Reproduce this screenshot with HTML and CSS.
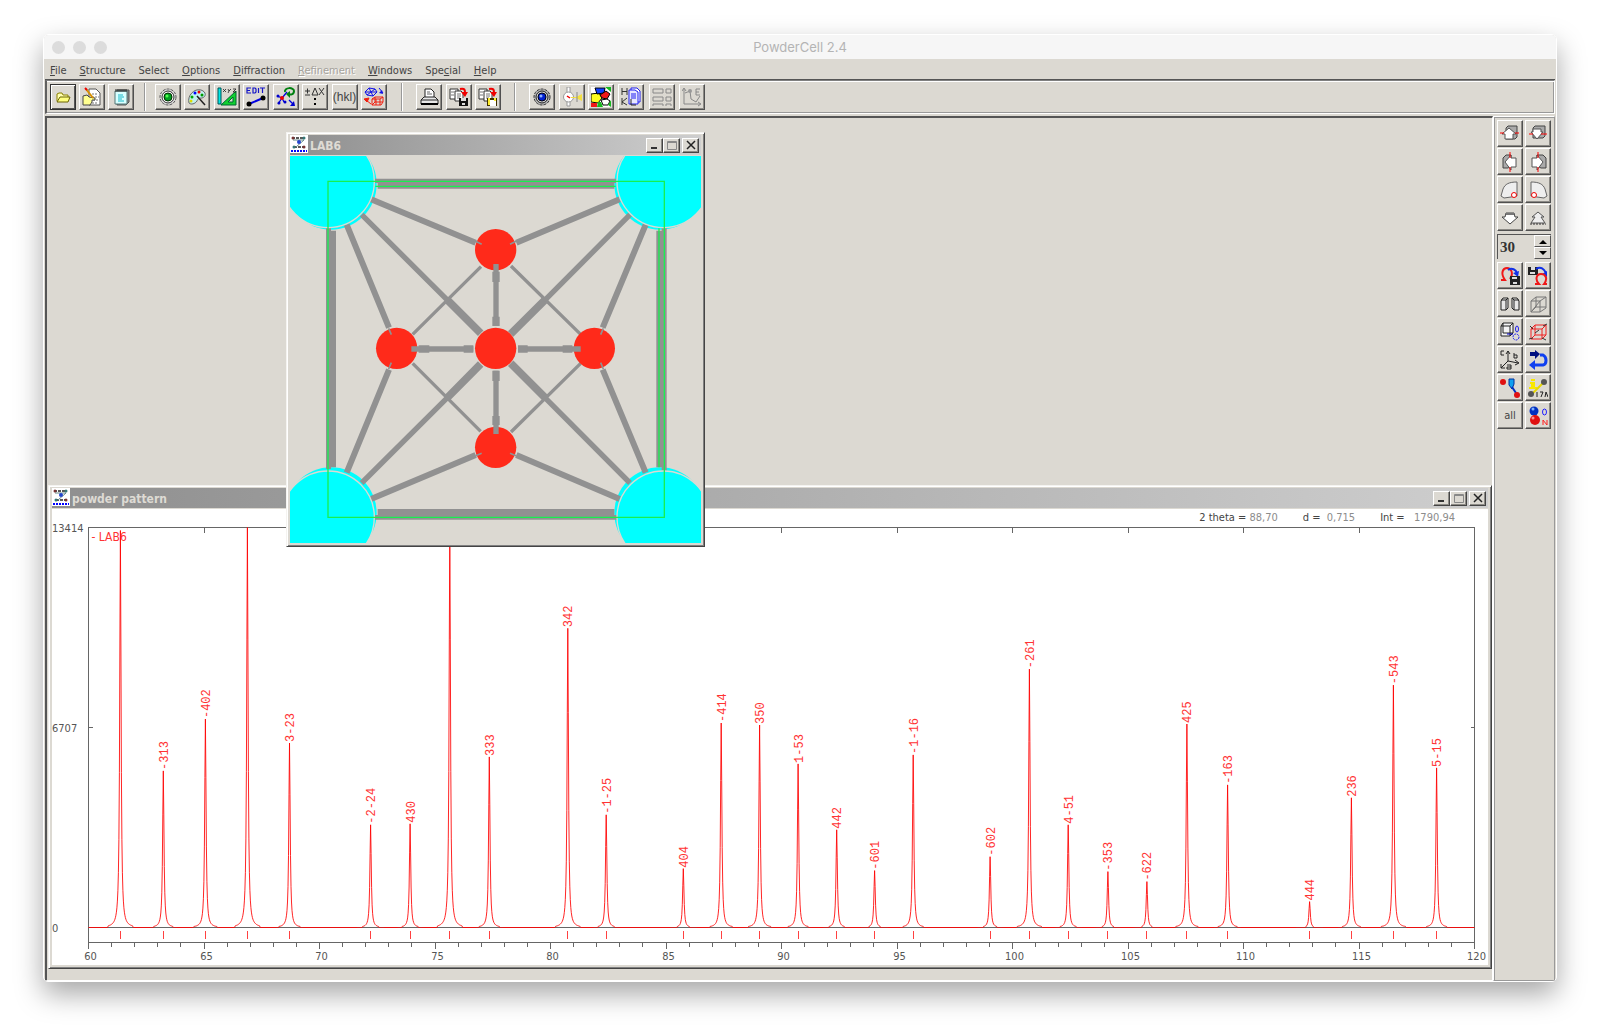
FILE: index.html
```html
<!DOCTYPE html>
<html lang="en">

<head>
    <meta charset="UTF-8">
    <meta name="viewport" content="width=device-width, initial-scale=1.0">
    <title>PowderCell 2.4</title>
    <link rel="stylesheet" href="styles.css">
</head>

<body>
    <div class="app">
        <header class="mac-title">
            <span class="dots"><i></i><i></i><i></i></span>
            <span>PowderCell 2.4</span>
        </header>

        <nav class="menu">
            <button><u>F</u>ile</button>
            <button><u>S</u>tructure</button>
            <button>Select</button>
            <button><u>O</u>ptions</button>
            <button><u>D</u>iffraction</button>
            <button disabled><u>R</u>efinement</button>
            <button><u>W</u>indows</button>
            <button>Spe<u>c</u>ial</button>
            <button><u>H</u>elp</button>
        </nav>

        <!-- toolbar -->
        <div class="toolbar">
            <div class="group files">
                <button class="tool active" aria-label="Open">
                    <svg viewBox="0 0 20 20"><path d="M4 14V7l2-1h3l1 2h5v2" fill="#ffffb0" stroke="#8a8000"/><path d="M4 15l3-5h10l-2 5z" fill="#ffff80" stroke="#6b6400"/></svg>
                </button>
                <button class="tool" aria-label="Edit structure">
                    <svg viewBox="0 0 20 20"><path d="M7 2h7l4 4v12H7z" fill="#fff" stroke="#555"/><path d="M10 7h6M10 10h7M11 13h6M10 16h6" stroke="#777" stroke-dasharray="2 1"/><path d="M1 9l4-1 2 2 6 1v2h-3v2l-2 3H1z" fill="#ffff90" stroke="#444"/><path d="M4 2l7 9" stroke="#d89000" stroke-width="2"/><path d="M3 1l2 2" stroke="#e00" stroke-width="2"/></svg>
                </button>
                <button class="tool" aria-label="Notes">
                    <svg viewBox="0 0 20 20"><path d="M6 3h12v12l-3 3H6z" fill="#888" stroke="#555"/><path d="M4 4h12v13H4z" fill="#d8ffff" stroke="#577"/><path d="M5 2v3M7 2v3M9 2v3M11 2v3M13 2v3M15 2v3" stroke="#222"/><path d="M7 8h5M7 10h6M7 12h4M7 14h6" stroke="#18b8c8"/></svg>
                </button>
            </div>
            <div class="group main">
                <button class="tool" aria-label="Atoms">
                    <svg viewBox="0 0 20 20"><circle cx="10" cy="10" r="8" fill="#ddd" stroke="#555" stroke-dasharray="3 1"/><circle cx="10" cy="10" r="6" fill="#eee" stroke="#333"/><circle cx="10" cy="10" r="4" fill="#00a020" stroke="#003000"/><circle cx="9" cy="9" r="1.5" fill="#50ff50"/></svg>
                </button>
                <button class="tool" aria-label="Colours">
                    <svg viewBox="0 0 20 20"><path d="M2 16C0 9 7 1 14 3c6 2 5 7 1 8-4 0-4 1-5 3-2 3-6 4-8 2z" fill="#c0f0f0" stroke="#666"/><circle cx="8" cy="6" r="1.500" fill="#00f"/><circle cx="12" cy="5" r="1.500" fill="#e00"/><circle cx="15" cy="8" r="1.500" fill="#090"/><circle cx="5" cy="10" r="1.500" fill="#0a0"/><circle cx="4" cy="14" r="1.500" fill="#dd0"/><path d="M10 9l8 9" stroke="#222" stroke-width="1.500"/></svg>
                </button>
                <button class="tool" aria-label="Measure">
                    <svg viewBox="0 0 20 20"><path d="M1 1h3v16H1z" fill="#00e8e8" stroke="#055"/><path d="M4 18L19 4v14z" fill="#10d030" stroke="#063"/><path d="M11 15l5-5v5z" fill="#dcd9d2" stroke="#063"/><path d="M6 2l3 3M9 2L6 5M11 2l1 2 2-2M12 4l-1 2M16 2h3l-3 3h3" stroke="#222" stroke-width=".8" fill="none"/></svg>
                </button>
                <button class="tool" aria-label="Edit bonds">
                    <svg viewBox="0 0 20 20"><path d="M5 1H1v5h4M1 3.500h3M7 1v5h2l1-1V2L9 1zM12.500 1v5M14 1h5M16.500 1v5" stroke="#1414c8" stroke-width="1.200" fill="none"/><path d="M3 17l14-6" stroke="#0000e0" stroke-width="2"/><circle cx="3" cy="17" r="2.500"/><circle cx="17" cy="11" r="2.500"/></svg>
                </button>
                <button class="tool" aria-label="Rotate bonds">
                    <svg viewBox="0 0 20 20"><path d="M1 9l5 2 2 4M6 11l5-6M2 17l4-6M13 13l4 4" stroke="#0000e0" stroke-width="1.300" fill="none"/><circle cx="6" cy="11" r="2" fill="#e00"/><circle cx="3" cy="16" r="1.500" fill="#00c"/><circle cx="2" cy="9" r="1.500" fill="#00c"/><circle cx="9" cy="15" r="1.500" fill="#00c"/><path d="M19 19h-5l4-5z" fill="#00c"/><path d="M9 5c-1-5 9-5 9-1s-4 4-6 3" stroke="#008010" stroke-width="2" fill="none"/><path d="M14 4v7l-4-4z" fill="#008010"/></svg>
                </button>
                <button class="tool" aria-label="Shift origin">
                    <svg viewBox="0 0 20 20"><path d="M0 4h5M2.500 1.500v5M0 8h5M7 8l3-7 3 7zM14 1l5 7M19 1l-5 7" stroke="#333" fill="none"/><path d="M9 11h2v2H9zM9 16h2v2H9z"/></svg>
                </button>
                <button class="tool hkl" aria-label="Miller indices">(hkl)</button>
                <button class="tool" aria-label="Transform">
                    <svg viewBox="0 0 20 20"><path d="M1 5l4-4 6 1 2 3-4 4-6-1zM1 5l6 0 4-3M5 1l2 4 2 4M3 8l4-3 6 0" stroke="#1010e8" fill="none"/><path d="M15 1l4 5" stroke="#1010e8"/><path d="M19 7l-4-1 3-3z" fill="#1010e8"/><path d="M8 12l3-2h8v5l-2 3H8zM8 12h8v6M16 12l3-2M11 10v5l-3 3M11 15h8M12 12v6" stroke="#f02010" fill="none"/><path d="M0 12l5-1-2 4zM2 13l5 4" fill="#f02010" stroke="#f02010"/></svg>
                </button>
            </div>
            <div class="group output">
                <button class="tool" aria-label="Print">
                    <svg viewBox="0 0 20 20"><path d="M6 10V2h6l3 3v5" fill="#fff" stroke="#222"/><path d="M8 5h3M8 7h5" stroke="#666"/><path d="M2 13l3-3h11l3 3v4H2zM2 13h17" fill="#e8e8e8" stroke="#222"/><path d="M2 17h17" stroke="#000" stroke-width="2"/></svg>
                </button>
                <button class="tool" aria-label="Save data">
                    <svg viewBox="0 0 20 20"><path d="M1 2h8v10H1z" fill="#fff" stroke="#333"/><path d="M6 4h6l2 2v8H6z" fill="#fff" stroke="#333"/><path d="M2 5h3M2 8h3M8 7h4M8 9h4M8 11h3" stroke="#777"/><path d="M11 2c5-1 5 1 5 4" stroke="#f00000" stroke-width="2" fill="none"/><path d="M12 5h7l-3 5z" fill="#f00000"/><path d="M10 11h9v8h-9z" fill="#111"/><path d="M12 11h5v3h-5zM13 16h3v2h-3z" fill="#ddd"/></svg>
                </button>
                <button class="tool" aria-label="Copy data">
                    <svg viewBox="0 0 20 20"><path d="M1 2h8v10H1z" fill="#fff" stroke="#333"/><path d="M6 4h6l2 2v8H6z" fill="#fff" stroke="#333"/><path d="M2 5h3M2 8h3M8 7h4M8 9h4M8 11h3" stroke="#777"/><path d="M11 2c5-1 5 1 5 4" stroke="#f00000" stroke-width="2" fill="none"/><path d="M12 5h7l-3 5z" fill="#f00000"/><path d="M9 11h10v8H9z" fill="#403000"/><path d="M12 13h6v6h-6z" fill="#fff"/><path d="M10 11h2v7h-2zM16 11h2v3h-2z" fill="#ffee30"/></svg>
                </button>
            </div>
            <div class="group view">
                <button class="tool" aria-label="Diffraction on">
                    <svg viewBox="0 0 20 20"><circle cx="10" cy="10" r="8" fill="#b8b8b8" stroke="#333" stroke-dasharray="3 1"/><circle cx="10" cy="10" r="6" fill="#ccc" stroke="#222"/><circle cx="10" cy="10" r="4" fill="#0020d0" stroke="#001"/><circle cx="9" cy="9" r="1.500" fill="#90b0ff"/></svg>
                </button>
                <button class="tool" aria-label="Experiment">
                    <svg viewBox="0 0 20 20"><path d="M5 0h3v6H5zM5 14h3v5H5z" fill="#fff" stroke="#999"/><circle cx="6.500" cy="10" r="5" fill="#fff" stroke="#999"/><path d="M9 10h5l6-3v7l-6-3H9z" fill="#f4e040"/><path d="M5 9l3 2" stroke="#e00" stroke-width="1.500"/><path d="M15 5v10" stroke="#888"/></svg>
                </button>
                <button class="tool" aria-label="Phases">
                    <svg viewBox="0 0 20 20"><path d="M0 0h20v20H0z" fill="#fff"/><path d="M0 7l8-1 3 5-4 5-7-1z" fill="#ffff20" stroke="#000"/><path d="M4 1h10l-1 5-7 1z" fill="#1040ff" stroke="#000"/><path d="M9 8l6-4 4 3-3 5-5-1z" fill="#f01818" stroke="#000"/><path d="M10 13l6-1 3 2-2 4h-5z" fill="#fff" stroke="#000"/><path d="M14 0h6v5zM7 15h3l2 5H6zM17 18l3-5v7z" fill="#18b820"/><path d="M0 16h6v4H0z" fill="#f01818"/></svg>
                </button>
                <button class="tool" aria-label="HKL list">
                    <svg viewBox="0 0 20 20"><path d="M1 1v7M6 1v7M1 4.500h5M1 11v7M6 11l-5 4 5 3" stroke="#333" fill="none"/><path d="M10 3V1h6l3 3v11h-3" fill="#fff" stroke="#2020f0"/><path d="M8 3h6l3 2v12H8z" fill="#e8e8ff" stroke="#2020f0"/><path d="M10 7h5M10 9h5M10 11h5" stroke="#2020f0"/><path d="M10 12v6h5" stroke="#222" fill="none"/></svg>
                </button>
            </div>
            <div class="group last">
                <button class="tool" aria-label="Tile" disabled>
                    <svg viewBox="0 0 20 20"><path d="M1 2h10v4H1zM14 2h5v4h-5zM1 10h10v4H1zM14 10h5v4h-5zM1 19v-2h10v2M14 19v-2h5v2" fill="none" stroke="#888"/></svg>
                </button>
                <button class="tool" aria-label="Energy" disabled>
                    <svg viewBox="0 0 20 20"><path d="M2 2v15h16M0 4l2-3 2 3M16 15l3 2-3 2M3 6l5-2 1 8 5 3 4-6M18 2h-4v6h4M14 5h3" fill="none" stroke="#888"/><circle cx="8" cy="4" r="2" fill="#999"/></svg>
                </button>
            </div>
        </div>

        <div class="work">
            <main class="desktop">
                <!-- powder pattern window -->
                <section class="win powder">
                    <div class="caption">
                        <svg class="logo" viewBox="0 0 18 18"><path d="M0 0h18v18H0z" fill="#fff"/><path d="M2 3h13M4 12h12" stroke="#222" stroke-width="1.500" stroke-dasharray="3 1"/><path d="M3 5h11l-8 7" stroke="#688" fill="none"/><circle cx="3" cy="3" r="1.500" fill="#733"/><circle cx="14" cy="3" r="1.500" fill="#377"/><circle cx="9" cy="7" r="2" fill="#24c"/><circle cx="4" cy="12" r="1.500" fill="#377"/><circle cx="14" cy="12" r="1.500" fill="#733"/><path d="M1 16h16" stroke="#00f" stroke-width="2" stroke-dasharray="2 1"/></svg>
                        <h2>powder pattern</h2>
                        <button aria-label="Minimize"><svg viewBox="0 0 12 10"><path d="M2 8h6" stroke="#333" stroke-width="2"/></svg></button>
                        <button aria-label="Maximize"><svg viewBox="0 0 12 10"><path d="M1.500 1.500h9v8h-9zM1.500 2.500h9" fill="none" stroke="#888"/></svg></button>
                        <button class="close" aria-label="Close"><svg viewBox="0 0 12 10"><path d="M2 1l8 8M10 1l-8 8" stroke="#222" stroke-width="1.500"/></svg></button>
                    </div>
                    <div class="pattern">
                        <div class="readout">
                            <span>2 theta = <b>88,70</b></span>
                            <span>d =&nbsp; <b>0,715</b></span>
                            <span>Int = &nbsp; <b>1790,94</b></span>
                        </div>
                        <svg class="chart" id="chart"></svg>
                    </div>
                </section>

                <!-- structure window -->
                <section class="win lab6">
                    <div class="caption">
                        <svg class="logo" viewBox="0 0 18 18"><path d="M0 0h18v18H0z" fill="#fff"/><path d="M2 3h13M4 12h12" stroke="#222" stroke-width="1.500" stroke-dasharray="3 1"/><path d="M3 5h11l-8 7" stroke="#688" fill="none"/><circle cx="3" cy="3" r="1.500" fill="#733"/><circle cx="14" cy="3" r="1.500" fill="#377"/><circle cx="9" cy="7" r="2" fill="#24c"/><circle cx="4" cy="12" r="1.500" fill="#377"/><circle cx="14" cy="12" r="1.500" fill="#733"/><path d="M1 16h16" stroke="#00f" stroke-width="2" stroke-dasharray="2 1"/></svg>
                        <h2>LAB6</h2>
                        <button aria-label="Minimize"><svg viewBox="0 0 12 10"><path d="M2 8h6" stroke="#333" stroke-width="2"/></svg></button>
                        <button aria-label="Maximize"><svg viewBox="0 0 12 10"><path d="M1.500 1.500h9v8h-9zM1.500 2.500h9" fill="none" stroke="#888"/></svg></button>
                        <button class="close" aria-label="Close"><svg viewBox="0 0 12 10"><path d="M2 1l8 8M10 1l-8 8" stroke="#222" stroke-width="1.500"/></svg></button>
                    </div>
                    <svg class="cell" viewBox="30 96 1233 1161">
                        <!-- rear halves of the La atoms -->
                        <g fill="#0ff">
                            <circle cx="153" cy="180" r="137"/>
                            <circle cx="1140" cy="180" r="137"/>
                            <circle cx="153" cy="1167" r="137"/>
                            <circle cx="1140" cy="1167" r="137"/>
                        </g>
                        <!-- cell edges -->
                        <g fill="#919191">
                            <path d="M282 164h726v13H282zM293 177h710v17H293z"/>
                            <path d="M293 1155h710v18H293zM285 1173h729v14H285z"/>
                            <path d="M138 310h15v725h-15zM153 320h15v710h-15z"/>
                            <path d="M1129 320h16v710h-16zM1145 312h15v728h-15z"/>
                        </g>
                        <g stroke="#919191" fill="none">
                            <path stroke-width="18" d="M273 226L587 356M1019 226L709 356M273 1125L587 993M1019 1125L709 993M200 302L327 611M1097 302L968 611M200 1046L327 737M1097 1046L968 737"/>
                            <path stroke-width="16" d="M245 272L500 526M1050 272L797 526M245 1077L500 823M1050 1077L797 823"/>
                            <path stroke-width="23" d="M500 526L602 628M797 526L692 630M500 823L602 720M797 823L692 718"/>
                            <path stroke-width="10" d="M603 428L398 631M693 426L902 631M398 718L602 922M902 718L693 924"/>
                        </g>
                        <g fill="#ff2a1a">
                            <circle cx="647" cy="377" r="62"/>
                            <circle cx="350" cy="673" r="62"/>
                            <circle cx="647" cy="673" r="62"/>
                            <circle cx="943" cy="673" r="62"/>
                            <circle cx="647" cy="970" r="62"/>
                        </g>
                        <g stroke="#919191" fill="none">
                            <path stroke-width="16" d="M648 420V606M648 740V930M394 675H580M714 675H902"/>
                            <path stroke-width="22" d="M648 443V474M648 578V606M648 740V771M648 876V903M416 675H448M551 675H580M714 675H743M848 675H877"/>
                            <path stroke-width="5" d="M587 352L605 361M708 352L690 361M587 995L605 988M708 995L690 988M326 613L334 632M970 613L962 632M326 735L334 716M970 735L962 716"/>
                        </g>
                        <!-- front atoms with their light outline -->
                        <g fill="#0ff" stroke="#dcd9d2" stroke-width="4">
                            <circle cx="144" cy="172" r="139"/>
                            <circle cx="1150" cy="172" r="139"/>
                            <circle cx="144" cy="1180" r="139"/>
                            <circle cx="1150" cy="1180" r="139"/>
                        </g>
                        <path d="M144 172H1153V1180H144z" fill="none" stroke="#18ef50" stroke-width="4"/>
                        <path d="M286 187H1007M1137 313V1030" fill="none" stroke="#18ef50" stroke-width="4"/>
                    </svg>
                </section>
            </main>

            <aside class="side">
                <button class="tool" aria-label="Rotate up"><svg viewBox="0 0 20 20"><path d="M6 4l2-2h9v11l-2 2H6z" fill="#aaa" stroke="#444"/><path d="M2 10l7-6 7 6h-3v5H5v-5z" fill="#fff" stroke="#555"/><path d="M0 9h4M15 9h4" stroke="#f00"/></svg></button>
                <button class="tool" aria-label="Rotate down"><svg viewBox="0 0 20 20"><path d="M5 4l2-2h10v10l-2 2H5z" fill="#aaa" stroke="#444"/><path d="M3 8l6 7 6-7h-2V5H5v3z" fill="#fff" stroke="#555"/><path d="M1 10h4M13 10h6" stroke="#f00"/></svg></button>
                <button class="tool" aria-label="Rotate left"><svg viewBox="0 0 20 20"><path d="M3 6l3-3h5v11l-3 2H3z" fill="#aaa" stroke="#444"/><path d="M5 10l6-7v3h5v9h-5v3z" fill="#fff" stroke="#555"/><path d="M10 0v6M10 15v5" stroke="#f00"/></svg></button>
                <button class="tool" aria-label="Rotate right"><svg viewBox="0 0 20 20"><path d="M9 3h6l3 3v10h-5l-4-2z" fill="#aaa" stroke="#444"/><path d="M15 10L9 3v3H4v9h5v3z" fill="#fff" stroke="#555"/><path d="M10 0v6M10 15v5" stroke="#f00"/></svg></button>
                <button class="tool" aria-label="Roll left"><svg viewBox="0 0 20 20"><path d="M1 16l2-7C5 4 9 2 17 2v14l-6 1-7 1z" fill="#eee" stroke="#666"/><circle cx="14" cy="15" r="2.500" fill="#fff" stroke="#e00"/></svg></button>
                <button class="tool" aria-label="Roll right"><svg viewBox="0 0 20 20"><path d="M19 16l-2-7C15 4 11 2 3 2v14l6 1 7 1z" fill="#eee" stroke="#666"/><circle cx="6" cy="15" r="2.500" fill="#fff" stroke="#e00"/></svg></button>
                <button class="tool" aria-label="Move down"><svg viewBox="0 0 20 20"><path d="M6 5h8l1 4h3l-8 7-8-7h3z" fill="#fff" stroke="#444"/><path d="M6 6h8" stroke="#777" stroke-width="2"/></svg></button>
                <button class="tool" aria-label="Move up"><svg viewBox="0 0 20 20"><path d="M10 4l6 5h-3l4 6H3l4-6H4z" fill="#eee" stroke="#555"/><path d="M2 16h16" stroke="#333" stroke-dasharray="2 1"/></svg></button>

                <div class="spin">
                    <input type="text" value="30" aria-label="Rotation step">
                    <button aria-label="More"><svg viewBox="0 0 8 5"><path d="M0 5l4-4 4 4z"/></svg></button>
                    <button aria-label="Less"><svg viewBox="0 0 8 5"><path d="M0 0l4 4 4-4z"/></svg></button>
                </div>

                <button class="tool" aria-label="Save view"><svg viewBox="0 0 20 20"><path d="M1 14h4C0 7 3 2 7 2s7 5 3 11" fill="none" stroke="#f01818" stroke-width="2"/><path d="M8 4c4-3 8 0 9 3" fill="none" stroke="#1030e8" stroke-width="2"/><path d="M19 5l-1 6-5-4z" fill="#1030e8"/><path d="M10 10h10v9H10z" fill="#222"/><path d="M12 11h5v2h-5zM13 16h4v2h-4z" fill="#ddd"/></svg></button>
                <button class="tool" aria-label="Load view"><svg viewBox="0 0 20 20"><path d="M0 1h10v8H0z" fill="#222"/><path d="M3 1h4v3H3zM2 6h5v2H2z" fill="#ddd"/><path d="M8 3c5-3 8 0 10 4" fill="none" stroke="#1030e8" stroke-width="2"/><path d="M19 5v6l-5-3z" fill="#1030e8"/><path d="M7 18h4c-4-4-3-10 2-10s7 5 3 10h3" fill="none" stroke="#f01818" stroke-width="2"/></svg></button>
                <button class="tool" aria-label="Stereo view"><svg viewBox="0 0 20 20"><path d="M1 7l2-3h5v10l-2 2H1zM1 6h5v10M6 6l2-2M19 7l-2-3h-5v10l2 2h5zM19 6h-5v10M14 6l-2-2" fill="#e8e8e8" stroke="#222"/></svg></button>
                <button class="tool" aria-label="Perspective"><svg viewBox="0 0 20 20"><path d="M3 7h9v11H3zM3 7l5-4h10v11l-6 4M12 7l6-4M8 3v10l-5 5M8 13h10M3 18L12 7" fill="none" stroke="#777"/></svg></button>
                <button class="tool" aria-label="Cell content"><svg viewBox="0 0 20 20"><path d="M3 1h10v10H3zM1 4h9v10H1zM3 1L1 4M13 1l-3 3M13 11l-3 3" fill="#f4f4f4" stroke="#222"/><path d="M7 12h6" stroke="#00c"/><ellipse cx="17" cy="7" rx="1.500" ry="3" fill="none" stroke="#22e"/><circle cx="16" cy="15" r="3" fill="none" stroke="#22e" stroke-dasharray="2 1"/></svg></button>
                <button class="tool" aria-label="Cell edges"><svg viewBox="0 0 20 20"><path d="M3 7h11v10H3zM3 7l4-4h11v10l-4 4M14 7l4-4M7 3v10h11M3 17l4-4" fill="none" stroke="#f02020"/><path d="M1 17l4-1M7 11l4-3M15 4l4-2M2 4l3 3M14 16l4 2" stroke="#333"/></svg></button>
                <button class="tool" aria-label="Axes"><svg viewBox="0 0 20 20"><path d="M8 1v10l10 2M8 11l-7 7" fill="none" stroke="#222"/><path d="M6 4l2-3 2 3M15 10l4 3-4 2M1 14v4h4" fill="none" stroke="#222"/><path d="M4 1H1v4h3M14 3v5h3V5h-3M7 15h4v4H7v-2h4" fill="none" stroke="#222"/></svg></button>
                <button class="tool" aria-label="Undo"><svg viewBox="0 0 20 20"><path d="M2 2h5V0l5 4-5 5V6H2z" fill="#001080"/><path d="M12 5h3c4 2 4 9 0 10H6" fill="none" stroke="#1040f0" stroke-width="3"/><path d="M7 10v10l-6-5z" fill="#1040f0"/></svg></button>
                <button class="tool" aria-label="Pick atom"><svg viewBox="0 0 20 20"><circle cx="3" cy="4" r="3" fill="#e01010"/><path d="M9 1h5v5l-2 5-3-4z" fill="#10a0f0" stroke="#0030a0"/><path d="M12 9l4 6" stroke="#0030c0" stroke-width="2"/><circle cx="17" cy="17" r="3" fill="#e01010"/></svg></button>
                <button class="tool" aria-label="Bond length"><svg viewBox="0 0 20 20"><path d="M3 1h4v2H3zM2 4h5v5h2v2H1V9h2V6H2z" fill="#f8e800"/><path d="M4 16l12-12" stroke="#e8d800" stroke-width="2"/><circle cx="16" cy="4" r="3" fill="#555"/><circle cx="3" cy="16" r="3" fill="#555"/><path d="M9 14v5M12 14h3l-2 5M17 19l1-5 2 5" stroke="#222" fill="none"/></svg></button>
                <button class="tool all">all</button>
                <button class="tool" aria-label="Atom names"><svg viewBox="0 0 20 20"><circle cx="6" cy="5" r="4.500" fill="#0030c0"/><circle cx="5" cy="3" r="1.500" fill="#80b0ff"/><circle cx="7" cy="14" r="5" fill="#e01010"/><circle cx="5" cy="12" r="1.500" fill="#ff9090"/><ellipse cx="16.500" cy="6" rx="2" ry="3" fill="none" stroke="#22f"/><path d="M15 19v-5l4 5v-5" fill="none" stroke="#f22"/></svg></button>
            </aside>
        </div>
    </div>

    <script src="chart.js"></script>
</body>

</html>
```

FILE: styles.css
```css
* {
    box-sizing: border-box;
}

body {
    height: 100vh;
    margin: 0;
    padding: 34px 43px 51px;
    background: #fff;
    font-family: "DejaVu Sans Condensed", "Liberation Sans", sans-serif;
    font-size: 11px;
    color: #444;
    overflow: hidden;
}

button {
    font: inherit;
    color: inherit;
    padding: 0;
    border: none;
    background: none;
}

/* outer window */
.app {
    height: 100%;
    display: flex;
    flex-direction: column;
    background: #dcd9d2;
    border-radius: 5px;
    border: 1px solid #fff;
    box-shadow: 0 12px 28px rgba(0, 0, 0, 0.35);
    overflow: hidden;
}

.mac-title {
    height: 24px;
    display: grid;
    grid-template-columns: 1fr auto 1fr;
    align-items: center;
    padding: 0 8px;
    background: #f6f6f6;
    color: #b4b4b4;
    font-family: Inter, sans-serif;
    font-size: 13px;
}

.dots {
    display: flex;
    gap: 8px;
}

.dots i {
    width: 13px;
    height: 13px;
    border-radius: 50%;
    background: #dcdcdc;
}

/* menu */
.menu {
    height: 21px;
    display: flex;
    gap: 13px;
    align-items: center;
    padding: 2px 6px 0;
}

.menu button:disabled {
    color: #a5a29c;
    text-shadow: 1px 1px 0 #fff;
}

/* toolbar */
.toolbar {
    height: 34px;
    margin: 0 1px 2px;
    padding: 0 3px;
    display: flex;
    align-items: stretch;
    border: 1px solid #fff;
    border-top-color: #808080;
    border-left: 2px solid #606060;
    box-shadow: 0 -1px 0 #555, inset 0 1px 0 #fff, inset 0 -1px 0 #999, inset -1px 0 0 #999;
}

.group {
    display: flex;
    align-items: center;
    justify-content: space-between;
}

.files {
    width: 84px;
}

.main {
    width: 232px;
}

.output {
    width: 85px;
}

.view {
    width: 115px;
    margin-right: 5px;
}

.last {
    width: 56px;
}

.main,
.output,
.view {
    position: relative;
    margin-left: 21px;
}

.output {
    margin-left: 29px;
}

.view {
    margin-left: 28px;
}

.main::before,
.output::before,
.view::before {
    content: "";
    position: absolute;
    left: -11px;
    top: 2px;
    bottom: 2px;
    width: 2px;
    background: linear-gradient(90deg, #999 50%, #fff 50%);
}

.output::before,
.view::before {
    left: -15px;
}

.tool {
    width: 26px;
    height: 26px;
    display: flex;
    align-items: center;
    justify-content: center;
    background: #dcd9d2;
    border: 1px solid;
    border-color: #fff #505050 #505050 #fff;
    box-shadow: inset -1px -1px 0 #8c8a85;
}

.tool.active {
    border-color: #333;
    box-shadow: inset 1px 1px 0 #fff, inset -1px -1px 0 #555;
}

.tool svg {
    width: 20px;
    height: 20px;
}

/* workspace */
.work {
    flex: 1;
    min-height: 0;
    display: flex;
    padding: 0 1px;
}

.desktop {
    position: relative;
    flex: 1;
    border: 1px solid;
    border-width: 2px 1px 1px 2px;
    border-color: #555 #fff #fff #555;
    overflow: hidden;
}

.side {
    width: 62px;
    padding: 3px 3px 0;
    display: grid;
    grid-template-columns: 26px 26px;
    grid-template-rows: repeat(4, 27px) 29px repeat(6, 27px);
    column-gap: 2px;
    row-gap: 1px;
    height: 100%;
    border: 1px solid;
    border-color: #fff #999 #999 #fff;
    box-shadow: inset 1px 1px 0 #999;
}

.side .tool {
    height: 27px;
}

.spin {
    grid-column: span 2;
    align-self: center;
    display: grid;
    grid-template-columns: 1fr 17px;
    grid-template-rows: 12px 12px;
    border: 1px solid #555;
    border-right: none;
    border-bottom: none;
}

.spin input {
    grid-row: span 2;
    min-width: 0;
    padding: 0 2px;
    border: none;
    background: transparent;
    font: bold 15px "Liberation Serif", serif;
    color: #333;
}

.spin button {
    display: flex;
    align-items: center;
    justify-content: center;
    border: 1px solid;
    border-color: #fff #555 #555 #fff;
}

.spin svg {
    width: 8px;
    height: 5px;
}

/* inner windows */
.win {
    position: absolute;
    display: flex;
    flex-direction: column;
    padding: 2px 3px 3px;
    background: #dcd9d2;
    border: 1px solid;
    border-color: #f4f3f0 #444 #444 #f4f3f0;
    box-shadow: inset 1px 1px 0 #fff, inset -1px -1px 0 #808080;
}

.powder {
    left: 1px;
    right: 0;
    bottom: 11px;
    height: 484px;
}

.lab6 {
    left: 239px;
    top: 14px;
    width: 419px;
}

.caption {
    height: 21px;
    display: flex;
    align-items: center;
    padding-right: 2px;
    background: linear-gradient(90deg, #8f8f8f, #cecece);
    border-bottom: 1px solid #dcd9d2;
}

.caption h2 {
    flex: 1;
    margin: 2px 0 0 2px;
    font-size: 12px;
    line-height: 16px;
    color: #dedbd4;
}

.caption .logo {
    width: 18px;
    height: 18px;
    align-self: flex-start;
}

.caption button {
    width: 17px;
    height: 15px;
    display: flex;
    align-items: center;
    justify-content: center;
    background: #dcd9d2;
    border: 1px solid;
    border-color: #fff #444 #444 #fff;
    box-shadow: inset -1px -1px 0 #8c8a85;
}

.caption button svg {
    width: 12px;
    height: 10px;
}

.caption .close {
    margin-left: 2px;
}

.cell {
    display: block;
    width: 100%;
}

.pattern {
    flex: 1;
    display: flex;
    flex-direction: column;
    background: #fff;
}

.readout {
    height: 18px;
    display: flex;
    justify-content: flex-end;
    align-items: center;
    gap: 25px;
    padding: 0 33px 2px 0;
}

.readout b {
    font-weight: normal;
    color: #8c8c8c;
}

/* chart */
.chart {
    flex: 1;
    width: 100%;
    overflow: visible;
    shape-rendering: crispEdges;
}

.chart .axis {
    fill: none;
    stroke: #666;
}

.chart .curve {
    fill: none;
    stroke: #f00;
    stroke-opacity: 0.85;
    shape-rendering: auto;
}

.chart .mark {
    stroke: #ff4040;
}

.chart text {
    fill: #555;
    font-size: 11px;
}

.chart .name {
    fill: #f33;
    font-size: 12px;
}

.chart .hkl {
    fill: #f33;
    font-family: "Liberation Mono", monospace;
    font-size: 12px;
}

.tool.hkl {
    font-size: 12px;
    font-family: "Liberation Sans", sans-serif;
}
```

FILE: chart.js
```js
// [2 theta, intensity, hkl]
const peaks = [
    [61.38, 13313, ''], [63.24, 5252, '-313'], [65.06, 6991, '-402'], [66.88, 13414, ''],
    [68.70, 6188, '3-23'], [72.21, 3445, '-2-24'], [73.92, 3479, '430'], [75.64, 13414, ''],
    [77.35, 5720, '333'], [80.75, 10035, '342'], [82.41, 3780, '-1-25'], [85.75, 1974, '404'],
    [87.39, 6857, '-414'], [89.05, 6790, '350'], [90.72, 5486, '1-53'], [92.39, 3278, '442'],
    [94.03, 1907, '-601'], [95.70, 5787, '-1-16'], [99.03, 2375, '-602'], [100.73, 8664, '-261'],
    [102.41, 3445, '4-51'], [104.13, 1873, '-353'], [105.82, 1539, '-622'], [107.55, 6824, '425'],
    [109.31, 4783, '-163'], [112.86, 870, '444'], [114.67, 4349, '236'], [116.49, 8128, '-543'],
    [118.36, 5352, '5-15']
];
const MAX = 13414;
const chart = document.getElementById('chart');

function draw() {
    const w = chart.clientWidth;
    const h = chart.clientHeight;
    const left = 36.5, right = w - 13.5, top = 0.5, axis = h - 22.5, base = axis - 15;
    const px = t => left + (t - 60) / 60 * (right - left);
    const py = i => base - i / MAX * (base - top);
    let out = '';

    // frame and ticks
    out += `<path class="axis" d="M${left} ${top}H${right}V${axis}H${left}zM${left} ${base}H${right}"/>`;
    let ticks = `M${left} ${py(6707)}h4M${right} ${py(6707)}h-4`;
    for (let t = 60; t <= 120; t++) {
        const x = Math.floor(px(t)) + 0.5;
        ticks += `M${x} ${axis}v${t % 5 ? 4 : 6}`;
        if (t % 5 === 0) {
            ticks += `M${x} ${top}v5`;
            out += `<text x="${x + 2}" y="${axis + 17}" text-anchor="middle">${t}</text>`;
        }
    }
    out += `<path class="axis" d="${ticks}"/>`;
    [MAX, 6707, 0].forEach(v => {
        out += `<text x="0" y="${py(v) + 4}">${v}</text>`;
    });

    // lorentzian peaks, cut off one pixel above the base line
    let d = `M${left} ${base}`;
    peaks.forEach(([t, i, name]) => {
        const x = px(t);
        const height = base - py(i);
        d += `H${(x - 13).toFixed(1)}`;
        for (let s = -12; s <= 12; s += 0.5) {
            const v = height / (1 + (s / 0.8) ** 2);
            if (v > 1) d += `L${(x + s).toFixed(1)} ${(base - v).toFixed(1)}`;
            else d += `L${(x + s).toFixed(1)} ${base}`;
        }
        d += `L${(x + 13).toFixed(1)} ${base}`;
        const r = Math.floor(x) + 0.5;
        out += `<path class="mark" d="M${r} ${base + 3}v8"/>`;
        out += `<text class="hkl" transform="translate(${r + 4} ${py(i) - 1}) rotate(-90)">${name}</text>`;
    });
    out += `<path class="curve" d="${d}H${right}"/>`;
    out += `<text class="name" x="${left + 3}" y="14">- LAB6</text>`;
    chart.innerHTML = out;
}

draw();
window.addEventListener('resize', draw);
```
